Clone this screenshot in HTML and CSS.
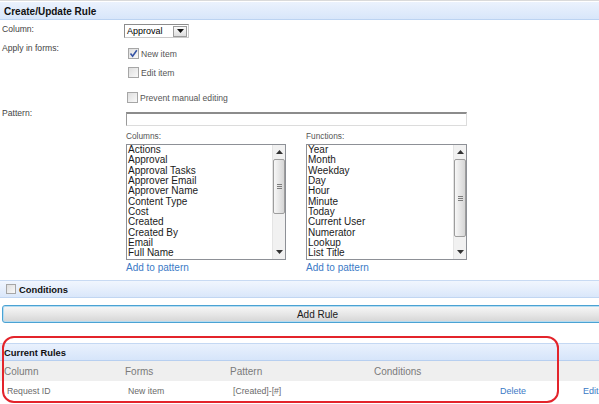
FILE: index.html
```html
<!DOCTYPE html>
<html>
<head>
<meta charset="utf-8">
<title>Create/Update Rule</title>
<link rel="stylesheet" href="styles.css">
</head>
<body>
<div class="page">
  <div class="topline"></div>
  <div class="band band-main">Create/Update Rule</div>

  <div class="form">
    <div class="row row-column">
      <div class="label">Column:</div>
      <div class="field">
        <div class="select">
          <span class="select-text">Approval</span>
          <span class="select-btn"><svg width="7" height="4" viewBox="0 0 7 4"><path d="M0 0H7L3.5 4Z" fill="#111"/></svg></span>
        </div>
      </div>
    </div>

    <div class="row row-apply">
      <div class="label">Apply in forms:</div>
      <div class="field checks">
        <div class="check check-new">
          <span class="box"><svg width="9" height="9" viewBox="0 0 9 9"><path d="M1.5 4.6L3.6 7.2L7.8 1.2" fill="none" stroke="#3553a5" stroke-width="1.6"/></svg></span>
          <span class="check-text">New item</span>
        </div>
        <div class="check check-edit">
          <span class="box"></span>
          <span class="check-text">Edit item</span>
        </div>
        <div class="check check-prevent">
          <span class="box"></span>
          <span class="check-text">Prevent manual editing</span>
        </div>
      </div>
    </div>

    <div class="row row-pattern">
      <div class="label">Pattern:</div>
      <div class="field"><div class="input"></div></div>
    </div>

    <div class="row row-lists">
      <div class="label"></div>
      <div class="field lists">
        <div class="listcol">
          <div class="sublabel">Columns:</div>
          <div class="listbox list-columns">
            <div class="items">
              <div>Actions</div>
              <div>Approval</div>
              <div>Approval Tasks</div>
              <div>Approver Email</div>
              <div>Approver Name</div>
              <div>Content Type</div>
              <div>Cost</div>
              <div>Created</div>
              <div>Created By</div>
              <div>Email</div>
              <div>Full Name</div>
            </div>
            <div class="scroll">
              <div class="arrow"><svg width="7" height="4" viewBox="0 0 7 4"><path d="M0 4H7L3.5 0Z" fill="#333"/></svg></div>
              <div class="thumb thumb-short"><span class="grip"></span></div>
              <div class="track"></div>
              <div class="arrow"><svg width="7" height="4" viewBox="0 0 7 4"><path d="M0 0H7L3.5 4Z" fill="#333"/></svg></div>
            </div>
          </div>
          <a class="link">Add to pattern</a>
        </div>
        <div class="listcol">
          <div class="sublabel">Functions:</div>
          <div class="listbox list-functions">
            <div class="items">
              <div>Year</div>
              <div>Month</div>
              <div>Weekday</div>
              <div>Day</div>
              <div>Hour</div>
              <div>Minute</div>
              <div>Today</div>
              <div>Current User</div>
              <div>Numerator</div>
              <div>Lookup</div>
              <div>List Title</div>
            </div>
            <div class="scroll">
              <div class="arrow"><svg width="7" height="4" viewBox="0 0 7 4"><path d="M0 4H7L3.5 0Z" fill="#333"/></svg></div>
              <div class="thumb thumb-long"><span class="grip"></span></div>
              <div class="track"></div>
              <div class="arrow"><svg width="7" height="4" viewBox="0 0 7 4"><path d="M0 0H7L3.5 4Z" fill="#333"/></svg></div>
            </div>
          </div>
          <a class="link">Add to pattern</a>
        </div>
      </div>
    </div>
  </div>

  <div class="band band-cond"><span class="box"></span><span>Conditions</span></div>

  <div class="btn">Add Rule</div>

  <div class="band band-rules">Current Rules</div>
  <div class="rules">
    <div class="trow thead">
      <div class="c1">Column</div>
      <div class="c2">Forms</div>
      <div class="c3">Pattern</div>
      <div class="c4">Conditions</div>
      <div class="c5"></div>
      <div class="c6"></div>
    </div>
    <div class="trow tdata">
      <div class="c1">Request ID</div>
      <div class="c2">New item</div>
      <div class="c3">[Created]-[#]</div>
      <div class="c4"></div>
      <div class="c5"><a class="link">Delete</a></div>
      <div class="c6"><a class="link">Edit</a></div>
    </div>
  </div>

  <div class="highlight"></div>
</div>
</body>
</html>
```

FILE: styles.css
```css
html, body {
  margin: 0;
  padding: 0;
  overflow: hidden;
  background: #fff;
}

.page {
  position: relative;
  width: 599px;
  height: 404px;
  overflow: hidden;
  font-family: "Liberation Sans", Arial, sans-serif;
  color: #333;
}

.topline {
  height: 1px;
  background: #dadada;
  margin-bottom: 1px;
}

.band {
  box-sizing: border-box;
  height: 18px;
  width: 640px;
  font-weight: bold;
  color: #111;
  display: flex;
  align-items: center;
}

.band-main {
  padding: 1px 0 0 4px;
  font-size: 10px;
  background: linear-gradient(#ebf2fd, #d8e6fa);
  border-bottom: 1px solid #bcd3f1;
}

.form {
  padding-left: 2px;
}

.row {
  display: flex;
  align-items: flex-start;
}

.label {
  width: 122px;
  flex: none;
  font-size: 8.6px;
  line-height: 12px;
  color: #444;
}

.field {
  flex: none;
}

/* Column row */
.row-column {
  height: 20px;
}
.row-column .label {
  padding-top: 3px;
}
.select {
  box-sizing: border-box;
  margin-top: 4px;
  width: 65px;
  height: 14px;
  display: flex;
  align-items: center;
  justify-content: space-between;
  border: 1px solid #c9c9c9;
  border-top-color: #8c8c8c;
  border-left-color: #8c8c8c;
  background: #fff;
}
.select-text {
  padding-left: 2px;
  font-size: 9px;
  color: #000;
}
.select-btn {
  box-sizing: border-box;
  width: 14px;
  height: 11px;
  margin-right: 1px;
  display: flex;
  align-items: center;
  justify-content: center;
  border: 1px solid #9b9b9b;
  background: linear-gradient(#fafafa, #dedede);
}

/* Apply row */
.row-apply {
  height: 66px;
}
.row-apply .label {
  padding-top: 2px;
}
.checks {
  display: flex;
  flex-direction: column;
  padding-top: 8px;
}
.check {
  display: flex;
  align-items: center;
  height: 11px;
  font-size: 8.6px;
  color: #555;
}
.check-new, .check-edit {
  margin-left: 4px;
}
.check-edit {
  margin-top: 8px;
}
.check-prevent {
  margin-left: 3px;
  margin-top: 14px;
}
.check-text {
  margin-left: 2px;
}
.box {
  box-sizing: border-box;
  width: 11px;
  height: 11px;
  flex: none;
  display: flex;
  align-items: center;
  justify-content: center;
  border: 1px solid #a6a6a6;
  background: linear-gradient(135deg, #dedede, #f9f9f9);
}

/* Pattern row */
.row-pattern {
  height: 22px;
}
.row-pattern .label {
  padding-top: 1px;
}
.input {
  box-sizing: border-box;
  margin: 6px 0 0 2px;
  width: 341px;
  height: 14px;
  border: 1px solid #dcdcdc;
  border-top: 2px solid #8c8c8c;
  border-left-color: #9a9a9a;
  background: #fff;
}

/* Lists */
.lists {
  display: flex;
  gap: 20px;
  padding-left: 2px;
}
.listcol {
  display: flex;
  flex-direction: column;
  align-items: flex-start;
}
.sublabel {
  margin-top: 2px;
  font-size: 8.3px;
  line-height: 12px;
  color: #555;
}
.listbox {
  box-sizing: border-box;
  margin-top: 2px;
  height: 116px;
  display: flex;
  border: 1px solid #8d9096;
  background: #fff;
  overflow: hidden;
}
.list-columns {
  width: 160px;
}
.list-functions {
  width: 161px;
}
.items {
  flex: 1;
  padding-left: 1px;
  font-size: 10px;
  line-height: 10.35px;
  color: #1a1a1a;
  white-space: nowrap;
  overflow: hidden;
}
.scroll {
  width: 12px;
  flex: none;
  display: flex;
  flex-direction: column;
  background: #f1f1f1;
  border-left: 1px solid #e4e4e4;
}
.arrow {
  height: 14px;
  flex: none;
  display: flex;
  align-items: center;
  justify-content: center;
}
.thumb {
  box-sizing: border-box;
  flex: none;
  margin: 0 0 0 0;
  width: 12px;
  display: flex;
  align-items: center;
  justify-content: center;
  border: 1px solid #9d9d9d;
  border-radius: 2px;
  background: linear-gradient(to right, #f7f7f7, #e3e3e3 60%, #d6d6d6);
}
.thumb-short {
  height: 55px;
}
.thumb-long {
  height: 78px;
}
.grip {
  width: 5px;
  height: 5px;
  background: repeating-linear-gradient(#7d7d7d 0 1px, transparent 1px 2px);
}
.track {
  flex: 1;
}

.link {
  margin-top: 2px;
  font-size: 10px;
  line-height: 12px;
  color: #3b7ac6;
  text-decoration: none;
}

/* Conditions bar */
.band-cond {
  margin-top: 6px;
  padding-left: 6px;
  font-size: 9.4px;
  background: linear-gradient(#f1f6fe, #dae7fa);
  border-top: 1px solid #c8daf3;
  border-bottom: 1px solid #c1d6f2;
}
.band-cond .box {
  width: 10px;
  height: 10px;
  margin-right: 3px;
}

/* Button */
.btn {
  box-sizing: border-box;
  margin: 7px 0 0 2px;
  width: 631px;
  height: 18px;
  display: flex;
  align-items: center;
  justify-content: center;
  font-size: 10px;
  color: #1a1a1a;
  border: 1px solid #4aa2d3;
  border-radius: 3px;
  box-shadow: inset 0 0 0 1px #b5dcf1;
  background: linear-gradient(#f7f7f7, #e9e9e9 45%, #d5d5d5);
}

/* Current rules */
.band-rules {
  margin-top: 20px;
  padding-left: 4px;
  font-size: 9.4px;
  background: linear-gradient(#e9f1fd, #d6e5fa);
  border-top: 1px solid #c4d8f3;
  border-bottom: 1px solid #b7cff0;
}
.rules {
  width: 640px;
}
.trow {
  display: grid;
  grid-template-columns: 121px 105px 144px 123px 83px 64px;
  height: 20px;
  align-items: center;
  white-space: nowrap;
}
.thead {
  background: #efefef;
  font-size: 10px;
  color: #7a7a7a;
}
.thead > div {
  padding-left: 4px;
}
.tdata {
  background: #fff;
  font-size: 8.7px;
  color: #6a6a6a;
}
.tdata > div {
  padding-left: 7px;
}
.tdata .link {
  margin: 0;
  font-size: 9px;
}

/* Red annotation */
.highlight {
  position: absolute;
  left: 2px;
  top: 336px;
  width: 557px;
  height: 67px;
  box-sizing: border-box;
  border: 2px solid #e3242b;
  border-radius: 12px;
  pointer-events: none;
}
```
